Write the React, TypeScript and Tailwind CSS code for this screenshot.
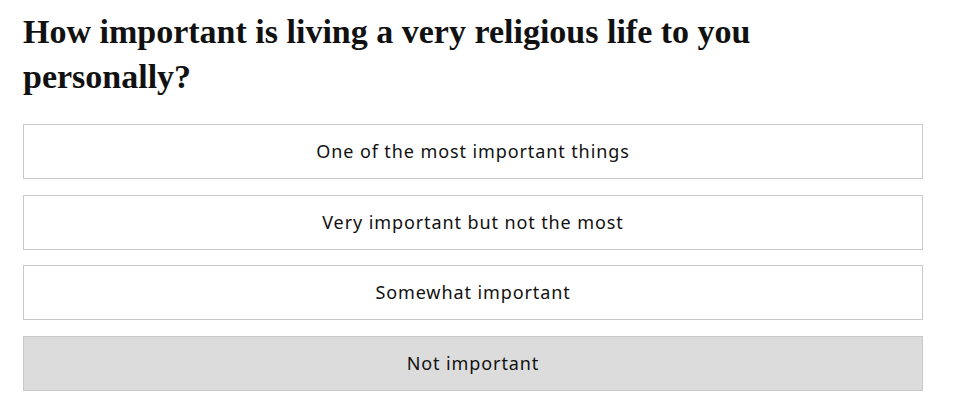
const OPTIONS = [
  "One of the most important things",
  "Very important but not the most",
  "Somewhat important",
  "Not important",
];

const SELECTED = 3;

export default function App() {
  return (
    <div className="min-h-[402px] w-[954px] bg-white pl-[23px] pt-[9px]">
      <h2
        className="w-[900px] text-[34px] font-bold leading-[45px] text-[#111]"
        style={{ fontFamily: "'Liberation Serif', Georgia, serif" }}
      >
        How important is living a very religious life to you personally?
      </h2>
      <div className="mt-[25px] flex w-[900px] flex-col gap-[15.5px]">
        {OPTIONS.map((label, i) => (
          <button
            key={label}
            type="button"
            className={`flex h-[55px] w-full items-center justify-center border border-[#c9c9c9] text-[18px] tracking-[0.9px] text-[#111] ${
              i === SELECTED ? "bg-[#dcdcdc]" : "bg-white"
            }`}
            style={{ fontFamily: "'Noto Sans', Arial, sans-serif" }}
          >
            {label}
          </button>
        ))}
      </div>
    </div>
  );
}
